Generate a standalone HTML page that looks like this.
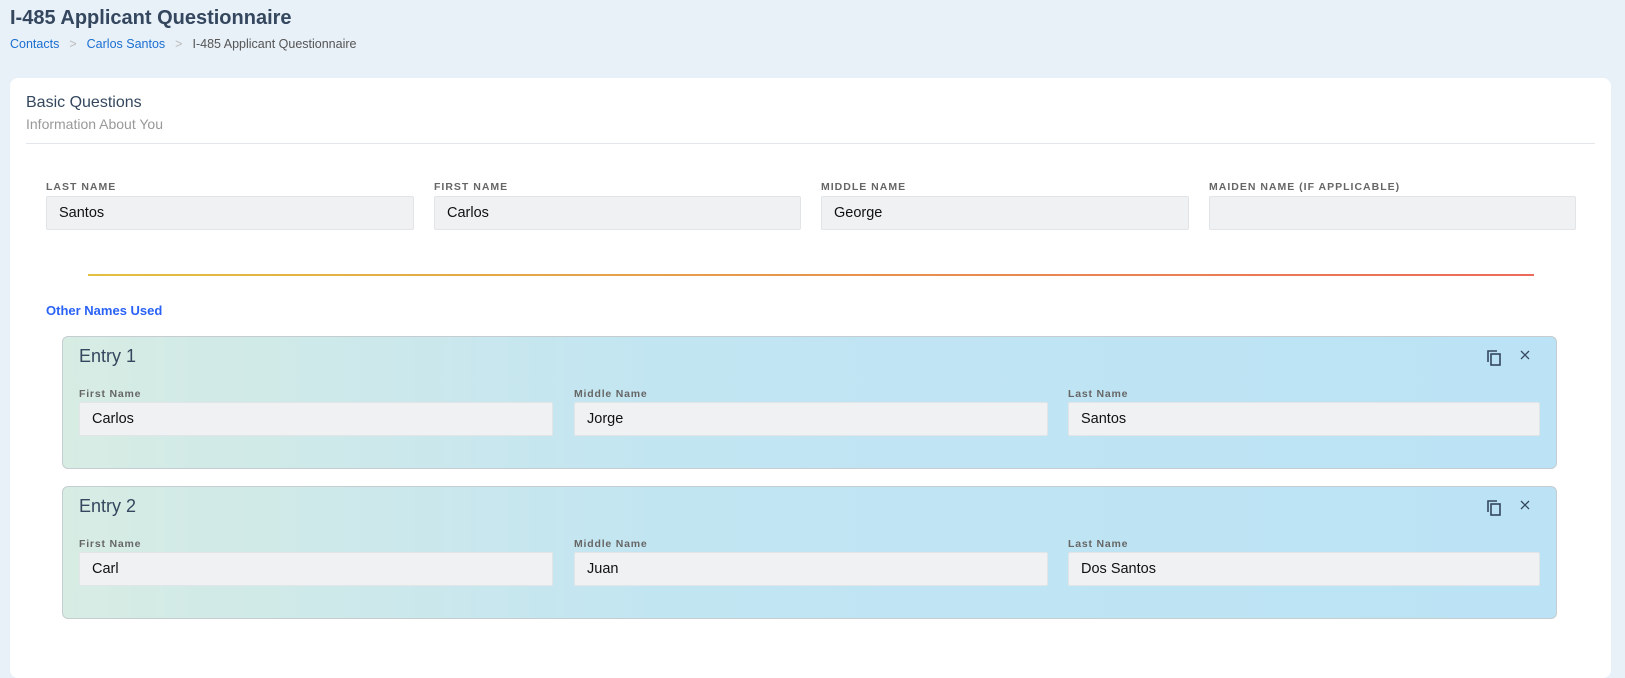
<!DOCTYPE html>
<html><head><meta charset="utf-8"><style>
*{box-sizing:border-box;margin:0;padding:0}
body{width:1625px;height:635px;overflow:hidden;background:#e8f0f8;font-family:"Liberation Sans",sans-serif;position:relative;color:#2f3e52}
.a{position:absolute}
.title{left:10px;top:7px;font-size:20px;font-weight:bold;color:#34475e}
.bc{left:10px;top:37px;font-size:12.5px;color:#555}
.bc a{color:#1a6fd0;text-decoration:none}
.bc .s{color:#bbb;margin:0 10px}
.card{left:10px;top:78px;width:1601px;height:600px;background:#fff;border-radius:8px}
.lbl{font-size:10.5px;font-weight:bold;letter-spacing:1px;color:#666}
.inp{background:#eff1f3;border:1px solid #e2e5e8;border-radius:2px;height:34px;font-size:14.5px;color:#111;padding:8px 12px}
.entry{left:62px;width:1495px;height:133px;border:1px solid #c6cdd0;border-radius:6px;background:linear-gradient(90deg,#d7ece3,#c2e5f2 40%,#bbe3f5)}
.et{font-size:18px;color:#34475e}
.el{font-size:10.5px;font-weight:bold;letter-spacing:.8px;color:#666}
</style></head><body>
<div class="a title">I-485 Applicant Questionnaire</div>
<div class="a bc"><a>Contacts</a><span class="s">&gt;</span><a>Carlos Santos</a><span class="s">&gt;</span>I-485 Applicant Questionnaire</div>
<div class="a card"></div>
<div class="a" style="left:26px;top:94px;font-size:16px;color:#34475e">Basic Questions</div>
<div class="a" style="left:26px;top:116px;font-size:14px;color:#999">Information About You</div>
<div class="a" style="left:26px;top:143px;width:1569px;height:1px;background:#e3e6ea"></div>

<div class="a lbl" style="left:46px;top:181px">LAST NAME</div>
<div class="a lbl" style="left:434px;top:181px">FIRST NAME</div>
<div class="a lbl" style="left:821px;top:181px">MIDDLE NAME</div>
<div class="a lbl" style="left:1209px;top:181px">MAIDEN NAME (IF APPLICABLE)</div>
<div class="a inp" style="left:46px;top:196px;width:368px">Santos</div>
<div class="a inp" style="left:434px;top:196px;width:367px">Carlos</div>
<div class="a inp" style="left:821px;top:196px;width:368px">George</div>
<div class="a inp" style="left:1209px;top:196px;width:367px"></div>

<div class="a" style="left:88px;top:274px;width:1446px;height:2px;background:linear-gradient(90deg,#e2c040,#ec6a5a)"></div>
<div class="a" style="left:46px;top:303px;font-size:13px;font-weight:bold;color:#2962f5">Other Names Used</div>

<div class="a entry" style="top:336px"></div>
<div class="a et" style="left:79px;top:346px">Entry 1</div>
<div class="a el" style="left:79px;top:388px">First Name</div>
<div class="a el" style="left:574px;top:388px">Middle Name</div>
<div class="a el" style="left:1068px;top:388px">Last Name</div>
<div class="a inp" style="left:79px;top:402px;width:474px">Carlos</div>
<div class="a inp" style="left:574px;top:402px;width:474px">Jorge</div>
<div class="a inp" style="left:1068px;top:402px;width:472px">Santos</div>

<div class="a entry" style="top:486px"></div>
<div class="a et" style="left:79px;top:496px">Entry 2</div>
<div class="a el" style="left:79px;top:538px">First Name</div>
<div class="a el" style="left:574px;top:538px">Middle Name</div>
<div class="a el" style="left:1068px;top:538px">Last Name</div>
<div class="a inp" style="left:79px;top:552px;width:474px">Carl</div>
<div class="a inp" style="left:574px;top:552px;width:474px">Juan</div>
<div class="a inp" style="left:1068px;top:552px;width:472px">Dos Santos</div>

<svg class="a" style="left:1486px;top:349px" width="18" height="18" viewBox="0 0 18 18" fill="none" stroke="#34475e" stroke-width="1.6"><path d="M2 13V2h9"/><rect x="5" y="5" width="9" height="11"/></svg>
<svg class="a" style="left:1520px;top:350px" width="10" height="10" viewBox="0 0 10 10" stroke="#34475e" stroke-width="1.3"><path d="M1 1l8 8M9 1l-8 8"/></svg>
<svg class="a" style="left:1486px;top:499px" width="18" height="18" viewBox="0 0 18 18" fill="none" stroke="#34475e" stroke-width="1.6"><path d="M2 13V2h9"/><rect x="5" y="5" width="9" height="11"/></svg>
<svg class="a" style="left:1520px;top:500px" width="10" height="10" viewBox="0 0 10 10" stroke="#34475e" stroke-width="1.3"><path d="M1 1l8 8M9 1l-8 8"/></svg>
</body></html>
